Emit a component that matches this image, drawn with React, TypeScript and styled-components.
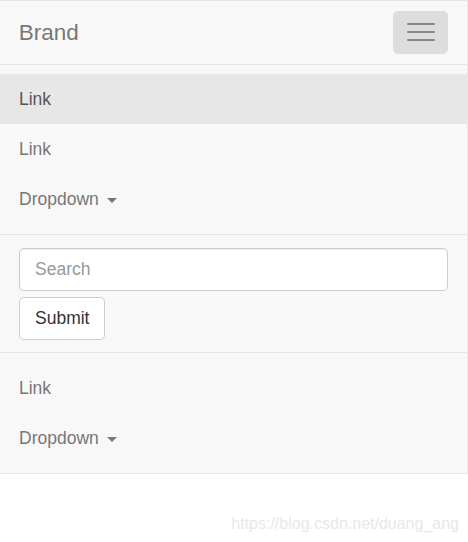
import React from "react";
import styled, { createGlobalStyle } from "styled-components";

const Global = createGlobalStyle`
  html, body { margin: 0; padding: 0; background: #fff; }
  body { font-family: "Liberation Sans", Arial, Helvetica, sans-serif; }
  * { box-sizing: border-box; }
`;

const Navbar = styled.nav`
  width: 468px;
  background: #f8f8f8;
  border: 1px solid #e7e7e7;
  border-left: none;
`;

const Header = styled.div`
  height: 63px;
  display: flex;
  align-items: center;
  justify-content: space-between;
  padding: 0 18.75px;
`;

const Brand = styled.a`
  font-size: 22.5px;
  line-height: 25px;
  color: #777;
  text-decoration: none;
  margin-top: -1px;
`;

const Toggle = styled.button`
  width: 55px;
  height: 43px;
  background: #ddd;
  border: 1px solid #ddd;
  border-radius: 5px;
  display: flex;
  flex-direction: column;
  align-items: center;
  justify-content: center;
  gap: 5.5px;
  padding: 0;
  margin-top: -1px;
`;

const Bar = styled.span`
  display: block;
  width: 27.5px;
  height: 2.5px;
  background: #888;
  border-radius: 1px;
`;

const Collapse = styled.div`
  border-top: 1px solid #e7e7e7;
`;

const Nav = styled.ul`
  list-style: none;
  margin: 9.4px 0;
  padding: 0;
`;

const NavItem = styled.li<{ $active?: boolean }>`
  height: 50px;
  display: flex;
  align-items: center;
  padding: 0 19px;
  font-size: 17.5px;
  line-height: 25px;
  color: ${(p) => (p.$active ? "#555" : "#777")};
  background: ${(p) => (p.$active ? "#e7e7e7" : "transparent")};
`;

const Caret = styled.span`
  display: inline-block;
  width: 0;
  height: 0;
  margin-left: 8px;
  margin-top: 2px;
  border-top: 5px solid #777;
  border-left: 5px solid transparent;
  border-right: 5px solid transparent;
`;

const Form = styled.form`
  margin: 10px 0;
  padding: 12.5px 19px;
  border-top: 1px solid #e7e7e7;
  border-bottom: 1px solid #e7e7e7;
  display: flex;
  flex-direction: column;
  align-items: flex-start;
  gap: 6.25px;
`;

const Input = styled.input`
  width: 100%;
  height: 43px;
  padding: 7.5px 15px;
  font-family: inherit;
  font-size: 17.5px;
  color: #555;
  background: #fff;
  border: 1px solid #ccc;
  border-radius: 5px;
  box-shadow: inset 0 1px 1px rgba(0, 0, 0, 0.075);
  outline: none;
  &::placeholder { color: #999; }
`;

const Button = styled.button`
  height: 42.5px;
  padding: 0 15px;
  font-family: inherit;
  font-size: 17.5px;
  color: #333;
  background: #fff;
  border: 1px solid #ccc;
  border-radius: 5px;
`;

const Watermark = styled.div`
  display: flex;
  justify-content: flex-end;
  padding: 41px 9px 0 0;
  font-size: 16px;
  line-height: 18px;
  color: #e8e8e8;
`;

export default function App() {
  return (
    <>
      <Global />
      <Navbar>
        <Header>
          <Brand>Brand</Brand>
          <Toggle type="button" aria-label="Toggle navigation">
            <Bar />
            <Bar />
            <Bar />
          </Toggle>
        </Header>
        <Collapse>
          <Nav>
            <NavItem $active>Link</NavItem>
            <NavItem>Link</NavItem>
            <NavItem>
              Dropdown
              <Caret />
            </NavItem>
          </Nav>
          <Form onSubmit={(e) => e.preventDefault()}>
            <Input type="text" placeholder="Search" />
            <Button type="submit">Submit</Button>
          </Form>
          <Nav>
            <NavItem>Link</NavItem>
            <NavItem>
              Dropdown
              <Caret />
            </NavItem>
          </Nav>
        </Collapse>
      </Navbar>
      <Watermark>https://blog.csdn.net/duang_ang</Watermark>
    </>
  );
}
